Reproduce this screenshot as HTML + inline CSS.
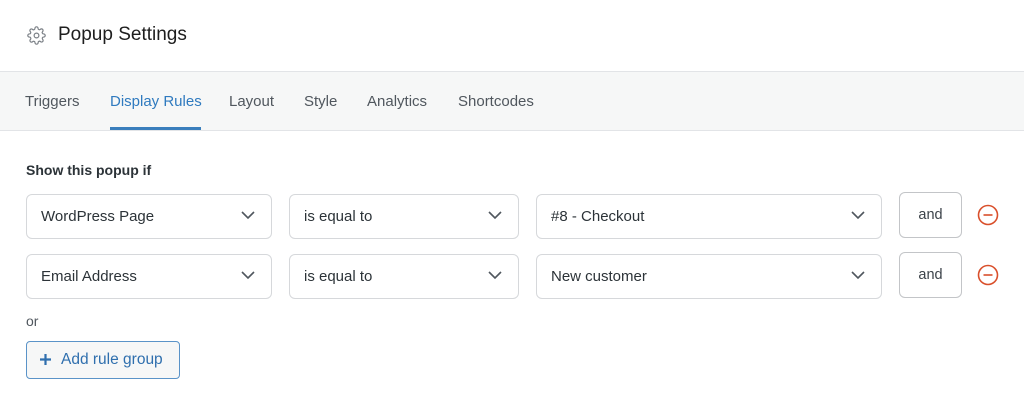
<!DOCTYPE html>
<html><head><style>
*{box-sizing:border-box;margin:0;padding:0}
body{width:1024px;height:406px;background:#fff;font-family:"Liberation Sans",sans-serif;color:#1e1e1e;position:relative;overflow:hidden}
.abs{position:absolute}
.hdr{top:0;left:0;width:1024px;height:72px;border-bottom:1px solid #e2e4e7}
.title{left:58px;top:24px;font-size:19px;color:#1e1e1e}
.tabs{top:72px;left:0;width:1024px;height:59px;background:#f6f7f7;border-bottom:1px solid #e2e4e7}
.tab{top:93px;font-size:15px;color:#50575e}
.sel{border:1px solid #d6d8db;border-radius:6px;height:45px;font-size:15px;color:#2c3338;padding:0 0 0 14px;line-height:43px}
.sel svg{position:absolute;right:16px;top:16px}
.and{border:1px solid #c3c5c8;border-radius:6px;width:63px;height:46px;font-size:14.5px;color:#3c434a;text-align:center;line-height:44px}
</style></head><body>
<div class="abs hdr"></div>
<svg class="abs" style="left:27px;top:26px" width="19" height="19" viewBox="0 0 24 24" fill="none" stroke="#7a7f85" stroke-width="1.5"><circle cx="12" cy="12" r="3"/><path d="M19.4 15a1.65 1.65 0 0 0 .33 1.82l.06.06a2 2 0 1 1-2.83 2.83l-.06-.06a1.65 1.65 0 0 0-1.820-.33 1.65 1.65 0 0 0-1 1.51V21a2 2 0 1 1-4 0v-.09A1.65 1.65 0 0 0 9 19.4a1.65 1.65 0 0 0-1.82.33l-.06.06a2 2 0 1 1-2.83-2.830l.06-.06A1.65 1.65 0 0 0 4.68 15a1.65 1.65 0 0 0-1.51-1H3a2 2 0 1 1 0-4h.09A1.65 1.65 0 0 0 4.6 9a1.65 1.65 0 0 0-.33-1.82l-.06-.06a2 2 0 1 1 2.83-2.83l.06.06A1.65 1.65 0 0 0 9 4.68a1.65 1.65 0 0 0 1-1.51V3a2 2 0 1 1 4 0v.09a1.65 1.65 0 0 0 1 1.51 1.65 1.65 0 0 0 1.82-.33l.06-.06a2 2 0 1 1 2.83 2.83l-.06.06A1.65 1.65 0 0 0 19.4 9a1.65 1.65 0 0 0 1.51 1H21a2 2 0 1 1 0 4h-.09a1.65 1.65 0 0 0-1.51 1z"/></svg>
<div class="abs title">Popup Settings</div>
<div class="abs tabs"></div>
<div class="abs tab" style="left:25px">Triggers</div>
<div class="abs tab" style="left:110px;color:#2f7abf">Display Rules</div>
<div class="abs" style="left:110px;top:127px;width:91px;height:3px;background:#3a7fbd"></div>
<div class="abs tab" style="left:229px">Layout</div>
<div class="abs tab" style="left:304px">Style</div>
<div class="abs tab" style="left:367px">Analytics</div>
<div class="abs tab" style="left:458px">Shortcodes</div>
<div class="abs" style="left:26px;top:162px;font-size:14px;font-weight:bold;color:#2c3338">Show this popup if</div>

<div class="abs sel" style="left:26px;top:194px;width:246px">WordPress Page<svg width="14" height="9" viewBox="0 0 14 9"><path d="M1 1l6 6 6-6" fill="none" stroke="#50575e" stroke-width="1.6"/></svg></div>
<div class="abs sel" style="left:289px;top:194px;width:230px">is equal to<svg width="14" height="9" viewBox="0 0 14 9"><path d="M1 1l6 6 6-6" fill="none" stroke="#50575e" stroke-width="1.6"/></svg></div>
<div class="abs sel" style="left:536px;top:194px;width:346px">#8 - Checkout<svg width="14" height="9" viewBox="0 0 14 9"><path d="M1 1l6 6 6-6" fill="none" stroke="#50575e" stroke-width="1.6"/></svg></div>
<div class="abs and" style="left:899px;top:192px">and</div>
<svg class="abs" style="left:977px;top:204px" width="22" height="22" viewBox="0 0 22 22"><circle cx="11" cy="11" r="9.5" fill="none" stroke="#d94f2b" stroke-width="1.6"/><path d="M6.5 11h9" stroke="#d94f2b" stroke-width="1.6"/></svg>

<div class="abs sel" style="left:26px;top:254px;width:246px">Email Address<svg width="14" height="9" viewBox="0 0 14 9"><path d="M1 1l6 6 6-6" fill="none" stroke="#50575e" stroke-width="1.6"/></svg></div>
<div class="abs sel" style="left:289px;top:254px;width:230px">is equal to<svg width="14" height="9" viewBox="0 0 14 9"><path d="M1 1l6 6 6-6" fill="none" stroke="#50575e" stroke-width="1.6"/></svg></div>
<div class="abs sel" style="left:536px;top:254px;width:346px">New customer<svg width="14" height="9" viewBox="0 0 14 9"><path d="M1 1l6 6 6-6" fill="none" stroke="#50575e" stroke-width="1.6"/></svg></div>
<div class="abs and" style="left:899px;top:252px">and</div>
<svg class="abs" style="left:977px;top:264px" width="22" height="22" viewBox="0 0 22 22"><circle cx="11" cy="11" r="9.5" fill="none" stroke="#d94f2b" stroke-width="1.6"/><path d="M6.5 11h9" stroke="#d94f2b" stroke-width="1.6"/></svg>

<div class="abs" style="left:26px;top:313px;font-size:14px;color:#50575e">or</div>
<div class="abs" style="left:26px;top:341px;width:154px;height:38px;border:1px solid #5a93c8;border-radius:4px;background:#f6f7f7;color:#2f6fae;font-size:15.5px;line-height:36px;padding-left:34px">Add rule group</div>
<svg class="abs" style="left:39px;top:353px" width="13" height="13" viewBox="0 0 13 13"><path d="M6.5 1v11M1 6.5h11" stroke="#2f6fae" stroke-width="2.2"/></svg>
</body></html>
